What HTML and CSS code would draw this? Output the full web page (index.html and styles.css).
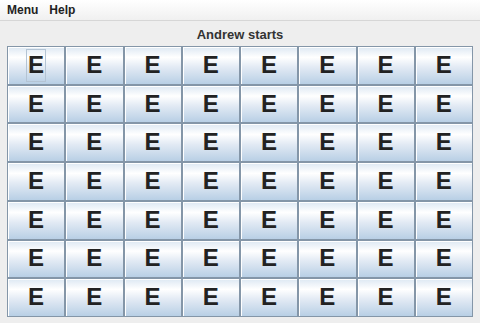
FILE: index.html
```html
<!DOCTYPE html>
<html lang="en">
<head>
  <meta charset="UTF-8">
  <title>Andrew starts</title>
  <link rel="stylesheet" href="styles.css">
</head>
<body>

  <div class="menubar">
    <span class="menu">Menu</span>
    <span class="menu">Help</span>
  </div>

  <div class="status">Andrew starts</div>

  <div class="board" id="board"></div>

  <script>
    const board = document.getElementById("board");

    for (let i = 0; i < 56; i++) {
      const cell = document.createElement("button");
      cell.className = "cell";
      const label = document.createElement("span");
      label.className = i === 0 ? "label focus" : "label";
      label.textContent = "E";
      cell.appendChild(label);
      board.appendChild(cell);
    }
  </script>

</body>
</html>
```

FILE: styles.css
```css
body {
  margin: 0;
  background-color: #eeeeee;
  font-family: "Liberation Sans", Arial, sans-serif;
  height: 323px;
  display: flex;
  flex-direction: column;
  overflow: hidden;
}

.menubar {
  display: flex;
  gap: 11px;
  height: 20px;
  align-items: center;
  padding-left: 7px;
  background: linear-gradient(#ffffff, #f0f0f0);
  border-bottom: 1px solid #d6d6d6;
  font-size: 12px;
  font-weight: bold;
  color: #222;
}

.status {
  height: 25px;
  display: flex;
  align-items: center;
  justify-content: center;
  font-size: 13px;
  font-weight: bold;
  color: #333;
  padding-top: 1px;
  box-sizing: border-box;
}

.board {
  display: grid;
  grid-template-columns: repeat(8, 1fr);
  grid-template-rows: repeat(7, 1fr);
  height: 271px;
  margin: 0 7px;
}

.cell {
  margin: 0;
  padding: 0;
  border: 1px solid #8496a8;
  box-shadow: inset 1px 1px 0 #ffffff;
  background: linear-gradient(#dde8f3 0%, #ffffff 28%, #e2eaf4 55%, #b8cfe5 100%);
  display: flex;
  align-items: center;
  justify-content: center;
  font-family: "Liberation Sans", Arial, sans-serif;
  font-size: 24px;
  font-weight: bold;
  color: #222222;
}

.label {
  display: block;
  padding: 3px 1px 4px;
  border: 1px solid transparent;
  line-height: 24px;
}

.label.focus {
  border-color: #b4c4d4;
}
```
